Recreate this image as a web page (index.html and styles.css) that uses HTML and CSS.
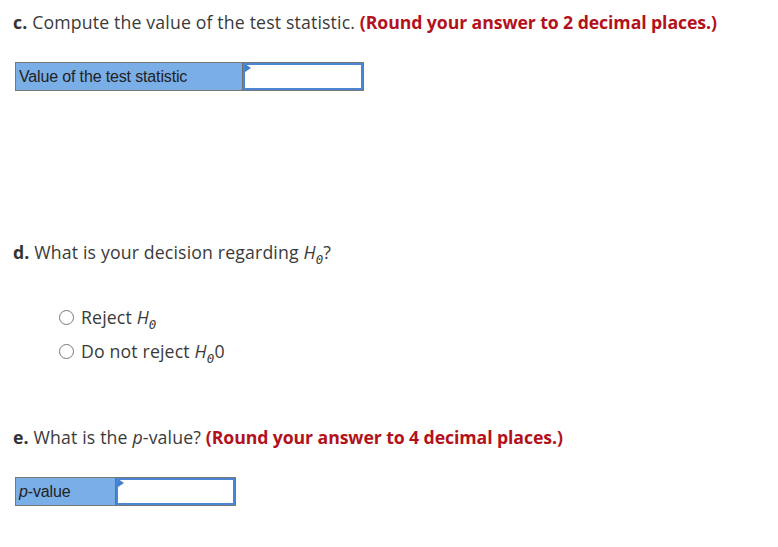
FILE: index.html
```html
<!DOCTYPE html>
<html>
<head>
<meta charset="utf-8">
<link rel="stylesheet" href="styles.css">
</head>
<body>
<div class="page">
  <p class="q q-c"><b>c.</b> Compute the value of the test statistic. <span class="hint">(Round your answer to 2 decimal places.)</span></p>
  <div class="answer answer-c">
    <div class="label">Value of the test statistic</div>
    <div class="input"><span class="flag"></span></div>
  </div>

  <p class="q q-d"><b>d.</b> What is your decision regarding <i class="h">H</i><sub class="z">0</sub>?</p>
  <ul class="choices">
    <li><span class="radio"></span><span class="opt">Reject <i class="h">H</i><sub class="z">0</sub></span></li>
    <li><span class="radio"></span><span class="opt">Do not reject <i class="h">H</i><sub class="z">0</sub>0</span></li>
  </ul>

  <p class="q q-e"><b>e.</b> What is the <i class="p">p</i>-value? <span class="hint">(Round your answer to 4 decimal places.)</span></p>
  <div class="answer answer-e">
    <div class="label"><i>p</i>-value</div>
    <div class="input"><span class="flag"></span></div>
  </div>
</div>
</body>
</html>
```
FILE: styles.css
```css
html, body { margin: 0; padding: 0; background: #fff; }
.page {
  padding: 0 0 0 13px;
  font-family: "Open Sans", "Lato", sans-serif;
  color: #333;
}
.q {
  margin: 0;
  font-size: 17.7px;
  line-height: 24px;
  color: #3a3a3a;
  letter-spacing: 0.15px;
}
.q b { color: #333; font-weight: 700; }
.hint { color: #b3121b; font-weight: 700; letter-spacing: -0.1px; }
.q-c { padding-top: 10px; }
.q-d { margin-top: 149px; }
.q-e { margin-top: 57px; }
.h { font-style: italic; }
.z {
  font-family: "DejaVu Sans Mono", monospace;
  font-style: italic;
  font-size: 12.5px;
  vertical-align: -5px;
  line-height: 0;
}
.answer {
  display: flex;
  margin-left: 2px;
  border: 1px solid #777;
  height: 29px;
  box-sizing: border-box;
  font-family: "Liberation Sans", Arial, sans-serif;
}
.answer-c { width: 349px; margin-top: 28px; }
.answer-e { width: 221px; margin-top: 28px; }
.label {
  background: #7aaee6;
  color: #222;
  font-size: 16px;
  line-height: 27px;
  padding-left: 3px;
  border-right: 1px solid #6f6f6f;
  letter-spacing: -0.15px;
}
.answer-c .label { width: 223px; }
.answer-e .label { width: 96px; }
.input {
  position: relative;
  flex: 1;
  background: #fff;
  border: 2px solid #4a86d4;
}
.flag {
  position: absolute;
  left: 0;
  top: 0;
  width: 0;
  height: 0;
  border-top: 4px solid transparent;
  border-bottom: 4px solid transparent;
  border-left: 6px solid #3f7fcf;
  transform: translateY(-1px);
}
.choices {
  list-style: none;
  margin: 36px 0 0 0;
  padding: 0 0 0 46px;
}
.choices li {
  display: flex;
  align-items: center;
  font-size: 17.7px;
  line-height: 24px;
  height: 34px;
  color: #3a3a3a;
  letter-spacing: 0.15px;
}
.radio {
  width: 15px;
  height: 15px;
  border: 1px solid #777;
  border-radius: 50%;
  margin-right: 7px;
  box-sizing: border-box;
  flex: none;
}
```
